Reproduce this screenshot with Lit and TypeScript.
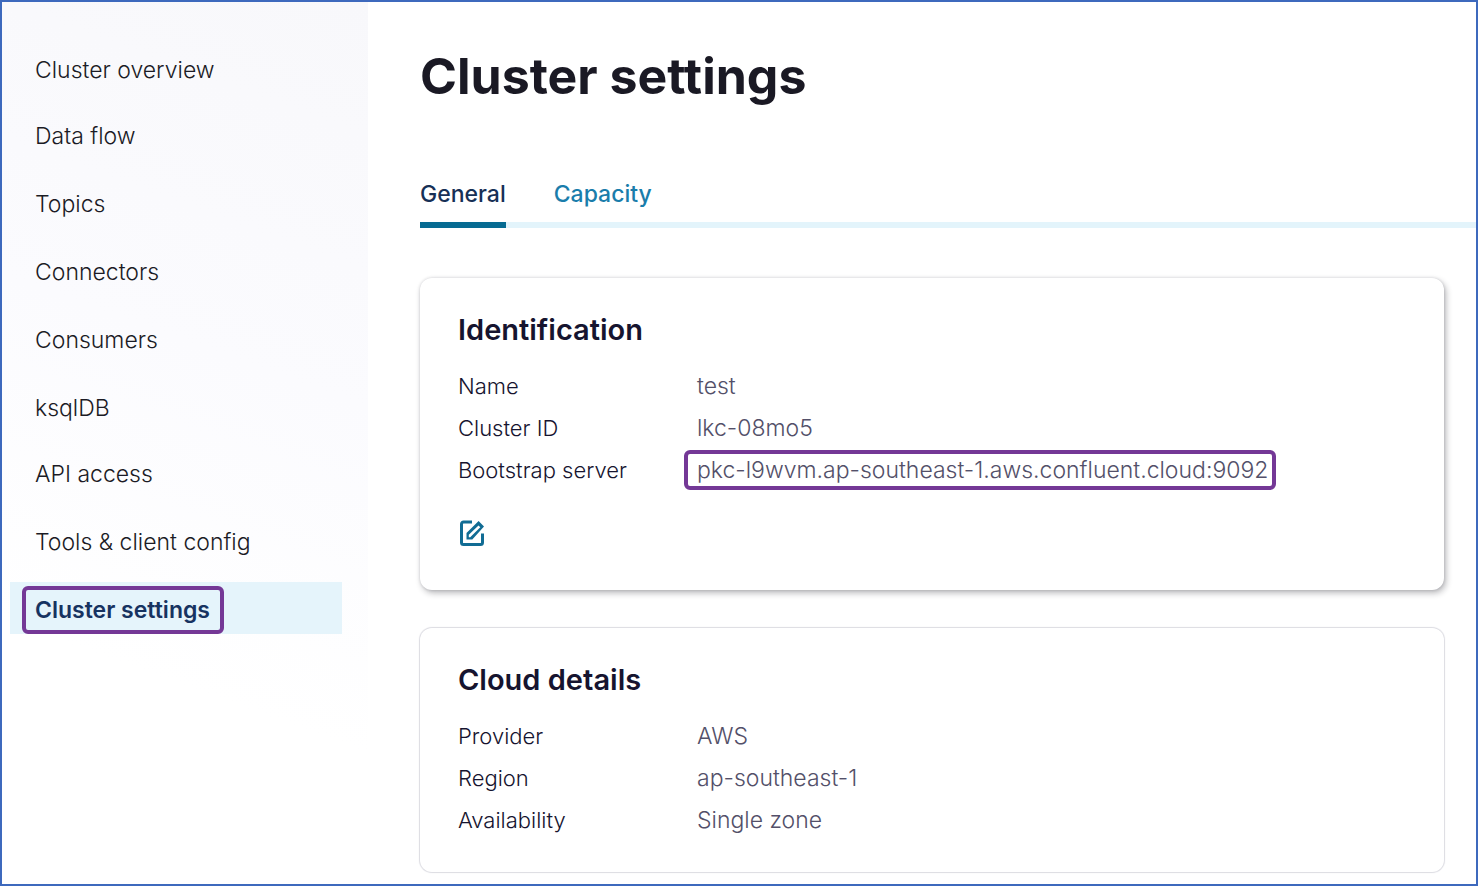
import { LitElement, html, css, nothing } from "lit";
import { customElement, property, state } from "lit/decorators.js";
import { classMap } from "lit/directives/class-map.js";

interface Detail {
  label: string;
  value: string;
  marked?: boolean;
}

const NAV_GROUPS: string[][] = [
  ["Cluster overview"],
  ["Data flow", "Topics", "Connectors", "Consumers", "ksqlDB"],
  ["API access", "Tools & client config", "Cluster settings"],
];

const IDENTIFICATION: Detail[] = [
  { label: "Name", value: "test" },
  { label: "Cluster ID", value: "lkc-08mo5" },
  {
    label: "Bootstrap server",
    value: "pkc-l9wvm.ap-southeast-1.aws.confluent.cloud:9092",
    marked: true,
  },
];

const CLOUD: Detail[] = [
  { label: "Provider", value: "AWS" },
  { label: "Region", value: "ap-southeast-1" },
  { label: "Availability", value: "Single zone" },
];

@customElement("cluster-nav")
export class ClusterNav extends LitElement {
  @property() current = "";

  static styles = css`
    :host {
      display: block;
      box-sizing: border-box;
      padding: 40px 26px 40px 8px;
      background: linear-gradient(200deg, #f8f8fb 0%, #fbfbfe 40%, #ffffff 74%);
    }
    .nav {
      display: flex;
      flex-direction: column;
      gap: 14px;
    }
    .group {
      display: flex;
      flex-direction: column;
      gap: 16px;
      margin: 0;
      padding: 0;
      list-style: none;
    }
    .link {
      display: flex;
      padding: 4px 0 0 12px;
      color: #1b1b25;
      font-weight: 300;
      text-decoration: none;
    }
    .text {
      padding: 0 10px 0 9px;
      border: 4px solid transparent;
      border-radius: 6px;
      line-height: 40px;
      white-space: nowrap;
    }
    .link.active {
      background: #e5f4fb;
      color: #173361;
      font-weight: 600;
    }
    .link.active .text {
      border-color: #743896;
    }
  `;

  render() {
    return html`
      <nav class="nav" aria-label="Cluster">
        ${NAV_GROUPS.map(
          (group) => html`
            <ul class="group">
              ${group.map((name) => {
                const active = name === this.current;
                return html`<li>
                  <a
                    href="#"
                    class=${classMap({ link: true, active })}
                    aria-current=${active ? "page" : nothing}
                    ><span class="text">${name}</span></a
                  >
                </li>`;
              })}
            </ul>
          `
        )}
      </nav>
    `;
  }
}

@customElement("detail-card")
export class DetailCard extends LitElement {
  @property() heading = "";
  @property({ attribute: false }) details: Detail[] = [];
  @property({ type: Boolean, reflect: true }) raised = false;

  static styles = css`
    :host {
      display: block;
      box-sizing: border-box;
      padding: 32px 38px;
      border-radius: 12px;
      background: #ffffff;
      box-shadow: 0 0 1px 1px #dcdce2;
    }
    :host([raised]) {
      box-shadow: 0 0 3px rgba(30, 30, 50, 0.16), 2px 3px 6px rgba(20, 20, 30, 0.3);
    }
    .heading {
      margin: 0 0 15px;
      color: #16142f;
      font-size: 29px;
      font-weight: 600;
      line-height: 40px;
    }
    .list {
      display: grid;
      grid-template-columns: 226px 1fr;
      row-gap: 2px;
      margin: 0;
      padding: 1px 0 0;
      font-weight: 300;
      line-height: 32px;
    }
    .label {
      padding: 4px 0;
      color: #16142f;
      font-size: 22px;
    }
    .value {
      justify-self: start;
      margin: 0;
      padding: 0 4px 0 9px;
      border: 4px solid transparent;
      border-radius: 6px;
      color: #535069;
    }
    .value.marked {
      border-color: #743896;
    }
    .edit {
      display: flex;
      align-items: center;
      height: 50px;
      margin: 18px 0 0;
      padding: 0;
      border: 0;
      background: none;
      color: #116c94;
      cursor: pointer;
    }
  `;

  render() {
    return html`
      <h2 class="heading">${this.heading}</h2>
      <dl class="list">
        ${this.details.map(
          (d) => html`
            <dt class="label">${d.label}</dt>
            <dd class=${classMap({ value: true, marked: !!d.marked })}>${d.value}</dd>
          `
        )}
      </dl>
      ${this.raised
        ? html`<button class="edit" type="button" aria-label="Edit">
            <svg width="28" height="28" viewBox="0 0 28 28" fill="none" aria-hidden="true">
              <path
                d="M14 3H5.500a2 2 0 0 0-2 2v18.500a2 2 0 0 0 2 2H22.500a2 2 0 0 0 2-2V14.500"
                stroke="currentColor"
                stroke-width="3"
              />
              <path
                d="M8.500 20.500v-6.400L20.600 2 26 7.400 14.300 20.500Z M10.800 18.200h1.400L22.300 8.200 20.500 6.400 10.800 15.800Z"
                fill="currentColor"
                fill-rule="evenodd"
              />
            </svg>
          </button>`
        : nothing}
    `;
  }
}

@customElement("app-root")
export class AppRoot extends LitElement {
  @state() private tab = "General";

  static styles = css`
    :host {
      display: grid;
      grid-template-columns: 366px minmax(0, 1fr);
      box-sizing: border-box;
      min-height: 100vh;
      border: 2px solid #3d69bd;
      background: #ffffff;
      font-family: Inter, "Liberation Sans", sans-serif;
      font-size: 23px;
    }
    .main {
      padding: 44px 0 12px 52px;
    }
    .title {
      margin: 0;
      color: #1a1924;
      font-size: 50px;
      font-weight: 700;
      line-height: 60px;
    }
    .tabs {
      display: flex;
      gap: 48px;
      margin-top: 74px;
      box-shadow: inset 0 -6px #e3f4fb;
    }
    .tab {
      padding: 0 0 14px;
      border: 0;
      border-bottom: 6px solid transparent;
      background: none;
      color: #1a7dab;
      font: inherit;
      font-weight: 500;
      line-height: 28px;
      cursor: pointer;
    }
    .tab.selected {
      border-bottom-color: #066b92;
      color: #173056;
    }
    .cards {
      display: flex;
      flex-direction: column;
      gap: 38px;
      margin: 50px 32px 0 0;
    }
  `;

  render() {
    return html`
      <cluster-nav current="Cluster settings"></cluster-nav>
      <main class="main">
        <h1 class="title">Cluster settings</h1>
        <div class="tabs" role="tablist">
          ${["General", "Capacity"].map(
            (name) => html`<button
              type="button"
              role="tab"
              class=${classMap({ tab: true, selected: this.tab === name })}
              aria-selected=${this.tab === name ? "true" : "false"}
              @click=${() => (this.tab = name)}
            >
              ${name}
            </button>`
          )}
        </div>
        <div class="cards">
          <detail-card raised heading="Identification" .details=${IDENTIFICATION}></detail-card>
          <detail-card heading="Cloud details" .details=${CLOUD}></detail-card>
        </div>
      </main>
    `;
  }
}
